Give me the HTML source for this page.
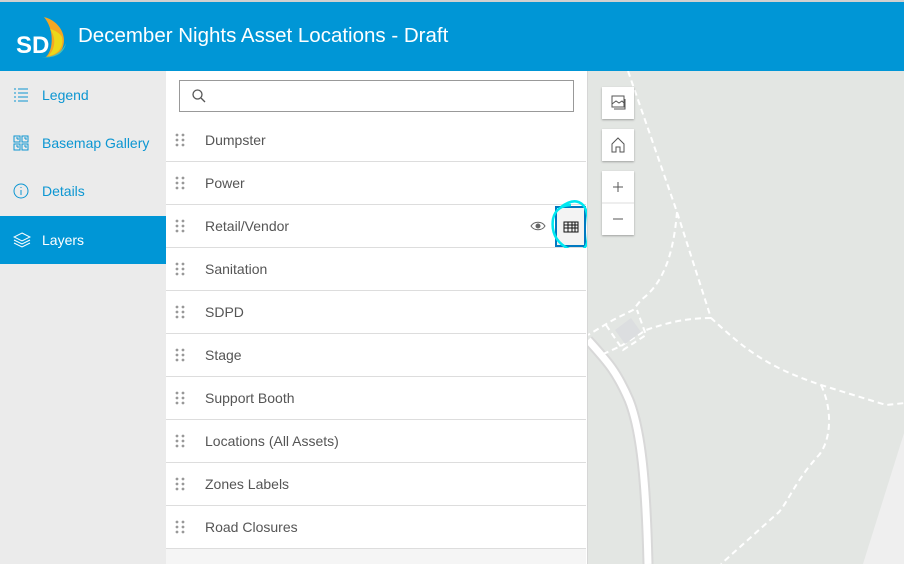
<!DOCTYPE html>
<html><head><meta charset="utf-8"><style>
*{margin:0;padding:0;box-sizing:border-box}
body{width:904px;height:564px;overflow:hidden;font-family:"Liberation Sans",sans-serif;position:relative;background:#fff}
.hdr{position:absolute;left:0;top:0;width:904px;height:71px;background:#0096d6;border-top:2px solid #d0d0d0}
.hdr .t{position:absolute;left:78px;top:22px;color:#fff;font-size:20.5px}
.side{position:absolute;left:0;top:71px;width:166px;height:493px;background:#ebebeb}
.si{position:absolute;left:0;width:166px;height:48px;color:#0c96d2;font-size:14px}
.si span{position:absolute;left:42px;top:16px}
.si svg{position:absolute;left:13px;top:16px}
.act{background:#0096d6;color:#fff}
.panel{position:absolute;left:166px;top:71px;width:420px;height:493px;background:#f5f5f5}
.search{position:absolute;left:13px;top:9px;width:395px;height:32px;border:1px solid #999;background:#fff}
.row{position:absolute;left:0;width:420px;height:43px;border-bottom:1px solid #ddd;color:#555;font-size:14px;background:#fff}
.row span{position:absolute;left:39px;top:13px}
.dots{position:absolute;left:9px;top:14px}
.map{position:absolute;left:587px;top:71px;width:317px;height:493px;background:#e3e6e3;border-left:1px solid #d6d6d6}
.btn{position:absolute;left:14px;width:32px;height:32px;background:#fff;box-shadow:0 1px 2px rgba(0,0,0,.3)}
</style></head><body>
<div class="hdr">
<svg style="position:absolute;left:14px;top:13px" width="56" height="44" viewBox="0 0 56 44">
<path d="M30 2 C46 6 54 22 48 34 C44 40 38 42 32 42 C40 34 40 14 30 2Z" fill="#f5a623"/>
<path d="M36 14 C42 22 42 34 34 41 C44 40 50 32 48 22 C46 18 40 15 36 14Z" fill="#ecd81a"/>
<path d="M26 42 C38 43 48 38 52 28 C50 38 42 44 26 42Z" fill="#4fc1b0"/>
<text x="2" y="38" font-family="Liberation Sans" font-weight="bold" font-size="24" fill="#fff">SD</text>
</svg>
<div class="t">December Nights Asset Locations - Draft</div></div>
<div class="side">
<div class="si" style="top:0"><svg width="16" height="16" viewBox="0 0 16 16" fill="none" stroke="#0c96d2"><path d="M5 2h10M5 6h10M5 10h10M5 14h10M1 2h2M1 6h2M1 10h2M1 14h2"/></svg><span>Legend</span></div>
<div class="si" style="top:48px"><svg width="16" height="16" viewBox="0 0 16 16" fill="none" stroke="#0c96d2"><rect x="1" y="1" width="6" height="6"/><rect x="9" y="1" width="6" height="6"/><rect x="1" y="9" width="6" height="6"/><rect x="9" y="9" width="6" height="6"/><path d="M3 3h2v2M11 3h2v2M3 11h2v2M11 11h2v2"/></svg><span>Basemap Gallery</span></div>
<div class="si" style="top:96px"><svg width="16" height="16" viewBox="0 0 16 16" fill="none" stroke="#0c96d2"><circle cx="8" cy="8" r="7"/><path d="M8 7v5M8 4v1"/></svg><span>Details</span></div>
<div class="si act" style="top:145px"><svg width="18" height="16" viewBox="0 0 18 16" fill="none" stroke="#fff"><path d="M9 1l8 4-8 4-8-4z M1 8l8 4 8-4 M1 11l8 4 8-4"/></svg><span>Layers</span></div>
</div>
<div class="panel">
<div class="search"><svg style="position:absolute;left:12px;top:8px" width="14" height="14" viewBox="0 0 14 14" fill="none" stroke="#555" stroke-width="1.3"><circle cx="5.5" cy="5.5" r="4.5"/><path d="M9 9l4 4"/></svg></div>
<div style="position:absolute;left:0;top:0;width:420px;height:48px;background:#fff"></div>
<div class="search"><svg style="position:absolute;left:12px;top:8px" width="14" height="14" viewBox="0 0 14 14" fill="none" stroke="#555" stroke-width="1.3"><circle cx="5.5" cy="5.5" r="4.5"/><path d="M9 9l4 4"/></svg></div>
<div id="rows"></div>
</div>
<div class="map">
<svg width="317" height="493" viewBox="587 71 317 493" style="position:absolute;left:0;top:0">
<path d="M904 430 L904 564 L862 564Z" fill="#efefef"/>
<path d="M587 340 C605 360 615 370 628 400 C640 430 645 480 647 564" stroke="#d8d8d8" stroke-width="11" fill="none"/>
<path d="M587 340 C605 360 615 370 628 400 C640 430 645 480 647 564" stroke="#fff" stroke-width="7" fill="none"/>
<g stroke="#fff" stroke-width="2" stroke-dasharray="6 4" fill="none">
<path d="M627 71 L676 212 L710 318 C740 345 760 365 820 385 L885 405 L904 403"/>
<path d="M676 212 C672 260 660 285 640 300 L632 310 L612 320 L587 335"/>
<path d="M710 318 C680 318 660 325 645 330 L620 346 L600 355"/>
<path d="M605 325 L622 350 L645 335 L636 310"/>
<path d="M820 385 C832 410 830 440 818 455 C795 480 788 500 778 512 L720 564"/>
</g>
<path d="M614 330 L630 318 L640 332 L624 344Z" fill="#dcdee0"/>
</svg>
<div class="btn" style="top:16px"><svg width="32" height="32" viewBox="0 0 32 32" fill="none" stroke="#555"><rect x="10" y="9" width="12" height="11"/><path d="M10 17l4-3 3 2 3-2 2 2M23 12v10h-11"/></svg></div>
<div class="btn" style="top:58px"><svg width="32" height="32" viewBox="0 0 32 32" fill="none" stroke="#555"><path d="M10 15l6-6 6 6v8h-4v-5h-4v5h-4z"/></svg></div>
<div class="btn" style="top:100px;height:64px"><svg width="32" height="64" viewBox="0 0 32 64" fill="none" stroke="#555"><path d="M11 16h10M16 11v10M11 48h10"/><path d="M0 32h32" stroke="#ddd"/></svg></div>
</div>
<script>
var n=["Dumpster","Power","Retail/Vendor","Sanitation","SDPD","Stage","Support Booth","Locations (All Assets)","Zones Labels","Road Closures"],h="";
n.forEach(function(t,i){h+='<div class="row" style="top:'+(48+i*43)+'px"><svg class="dots" width="10" height="14"><g fill="#999"><circle cx="2" cy="2" r="1.4"/><circle cx="8" cy="2" r="1.4"/><circle cx="2" cy="7" r="1.4"/><circle cx="8" cy="7" r="1.4"/><circle cx="2" cy="12" r="1.4"/><circle cx="8" cy="12" r="1.4"/></g></svg><span>'+t+'</span>'+(i==2?'<svg style="position:absolute;left:364px;top:15px" width="16" height="12" viewBox="0 0 16 12" fill="none" stroke="#666"><path d="M1 6C4 1 12 1 15 6C12 11 4 11 1 6Z"/><circle cx="8" cy="6" r="2" fill="#666"/></svg><div style="position:absolute;left:389px;top:1px;width:31px;height:41px;background:#f3f3f3;border:2px solid #0079c1"><svg style="position:absolute;left:6px;top:13px" width="16" height="12" viewBox="0 0 16 12" fill="none" stroke="#111"><rect x="1" y="1" width="14" height="10"/><path d="M1 4h14M1 7h14M5 1v10M9 1v10M12 1v10"/></svg></div><svg style="position:absolute;left:383px;top:-16px" width="44" height="80" viewBox="0 0 44 80" fill="none" stroke="#00e8f0" stroke-width="2.5"><path d="M12 18C20 12 28 10 34 16C40 22 40 44 38 54C36 62 28 64 20 60C8 54 2 44 4 30C6 20 14 16 22 16"/></svg>':'')+'</div>'});
document.getElementById("rows").innerHTML=h;
</script>
</body></html>
